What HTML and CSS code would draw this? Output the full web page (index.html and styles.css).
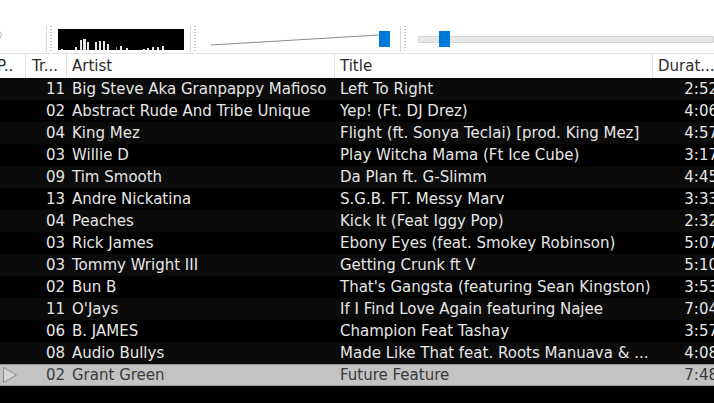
FILE: index.html
```html
<!DOCTYPE html>
<html lang="en">
<head>
  <meta charset="UTF-8">
  <title>Playlist</title>
  <link rel="stylesheet" href="styles.css">
</head>
<body>
  <div class="toolbar">
    <div class="tb-item tb-stub"><span class="stub-ring"></span></div>
    <div class="tb-sep"></div>
    <div class="tb-item tb-vis">
      <svg class="vis" width="126" height="21" viewBox="0 0 126 21">
        <rect x="3" y="20" width="2" height="1"/>
        <rect x="17" y="18" width="2" height="3"/>
        <rect x="22" y="11" width="2" height="10"/>
        <rect x="25" y="10" width="3" height="11"/>
        <rect x="29" y="13" width="2" height="8"/>
        <rect x="37" y="13" width="2" height="8"/>
        <rect x="41" y="12" width="2" height="9"/>
        <rect x="45" y="12" width="2" height="9"/>
        <rect x="49" y="15" width="2" height="6"/>
        <rect x="58" y="18" width="1" height="3" class="dim"/>
        <rect x="62" y="17" width="2" height="4"/>
        <rect x="68" y="19" width="2" height="2"/>
        <rect x="85" y="20" width="2" height="1"/>
        <rect x="89" y="19" width="2" height="2"/>
        <rect x="94" y="18" width="2" height="3"/>
        <rect x="99" y="18" width="2" height="3"/>
        <rect x="104" y="17" width="2" height="4"/>
      </svg>
    </div>
    <div class="tb-sep"></div>
    <div class="tb-item tb-volume">
      <svg width="202" height="26" viewBox="0 0 202 26">
        <line x1="13" y1="19" x2="181" y2="9" stroke="#8a8a8a" stroke-width="1"/>
        <rect x="181" y="5" width="11" height="16" fill="#0078d7"/>
      </svg>
    </div>
    <div class="tb-sep"></div>
    <div class="tb-item tb-seek">
      <div class="seek-track"></div>
      <div class="seek-thumb"></div>
    </div>
  </div>

  <div class="playlist">
    <div class="pl-row pl-head">
      <div class="cell c-pos">P..</div>
      <div class="cell c-track">Tr...</div>
      <div class="cell c-artist">Artist</div>
      <div class="cell c-title">Title</div>
      <div class="cell c-dur">Durat...</div>
    </div>
    <div id="rows"></div>
  </div>

  <script>
    const tracks = [
      ["11", "Big Steve Aka Granpappy Mafioso", "Left To Right", "2:52"],
      ["02", "Abstract Rude And Tribe Unique", "Yep! (Ft. DJ Drez)", "4:06"],
      ["04", "King Mez", "Flight (ft. Sonya Teclai) [prod. King Mez]", "4:57"],
      ["03", "Willie D", "Play Witcha Mama (Ft Ice Cube)", "3:17"],
      ["09", "Tim Smooth", "Da Plan ft. G-Slimm", "4:45"],
      ["13", "Andre Nickatina", "S.G.B. FT. Messy Marv", "3:33"],
      ["04", "Peaches", "Kick It (Feat Iggy Pop)", "2:32"],
      ["03", "Rick James", "Ebony Eyes (feat. Smokey Robinson)", "5:07"],
      ["03", "Tommy Wright III", "Getting Crunk ft V", "5:10"],
      ["02", "Bun B", "That's Gangsta (featuring Sean Kingston)", "3:53"],
      ["11", "O'Jays", "If I Find Love Again featuring Najee", "7:04"],
      ["06", "B. JAMES", "Champion Feat Tashay", "3:57"],
      ["08", "Audio Bullys", "Made Like That feat. Roots Manuava & ...", "4:08"],
      ["02", "Grant Green", "Future Feature", "7:48"]
    ];
    const playing = 13;
    const rows = document.getElementById("rows");

    tracks.forEach((t, i) => {
      const row = document.createElement("div");
      row.className = "pl-row" + (i % 2 === 0 ? " odd" : "") + (i === playing ? " playing" : "");
      const icon = i === playing
        ? '<svg width="18" height="18" viewBox="0 0 18 18"><polygon points="3.5,1.5 16.5,9 3.5,16.5" fill="#d4d4d4" stroke="#8c8c8c"/></svg>'
        : "";
      row.innerHTML =
        `<div class="cell c-pos">${icon}</div>` +
        `<div class="cell c-track">${t[0]}</div>` +
        `<div class="cell c-artist">${t[1]}</div>` +
        `<div class="cell c-title">${t[2]}</div>` +
        `<div class="cell c-dur">${t[3]}</div>`;
      rows.appendChild(row);
    });
  </script>
</body>
</html>
```

FILE: styles.css
```css
html, body {
  margin: 0;
  padding: 0;
  height: 100%;
}
body {
  background: #000;
  font-family: "DejaVu Sans", Verdana, sans-serif;
  font-size: 15px;
  overflow: hidden;
  width: 714px;
}

/* toolbar */
.toolbar {
  display: flex;
  align-items: stretch;
  height: 27px;
  padding-top: 26px;
  background: #fff;
  border-bottom: 1px solid #e3e3e3;
}
.tb-item {
  position: relative;
  height: 26px;
}
.tb-stub {
  width: 46px;
  overflow: hidden;
}
.stub-ring {
  position: absolute;
  left: -6px;
  top: 5px;
  width: 6px;
  height: 6px;
  border: 1px solid #b8b8b8;
  border-radius: 50%;
}
.tb-sep {
  width: 7px;
  height: 26px;
  border-left: 1px solid #d9d9d9;
  position: relative;
}
.tb-sep::after {
  content: "";
  position: absolute;
  left: 3px;
  top: 0;
  bottom: 0;
  width: 2px;
  background: repeating-linear-gradient(#c8c8c8 0 1px, transparent 1px 3px);
}
.tb-vis {
  width: 136px;
}
.vis {
  position: absolute;
  left: 4px;
  top: 3px;
  background: #000;
}
.vis rect {
  fill: #e6e6e6;
}
.vis rect.dim {
  fill: #8a8a8a;
}
.tb-volume {
  width: 202px;
}
.tb-seek {
  flex: 1;
}
.seek-track {
  position: absolute;
  left: 10px;
  right: 0;
  top: 10px;
  height: 5px;
  background: #e7e7e7;
  border: 1px solid #d6d6d6;
}
.seek-thumb {
  position: absolute;
  left: 31px;
  top: 5px;
  width: 11px;
  height: 16px;
  background: #0078d7;
}

/* playlist */
.playlist {
  width: 723px;
}
.pl-row {
  display: grid;
  grid-template-columns: 26px 41px 268px 318px 70px;
  height: 22px;
  line-height: 22px;
  color: #e6e6e6;
  background: #000;
}
.pl-row.odd {
  background: #0b0b0b;
}
.pl-row.playing {
  background: #c3c3c3;
  color: #3a3a3a;
  border-top: 1px solid #9a9a9a;
  border-bottom: 1px solid #9a9a9a;
  height: 20px;
  line-height: 20px;
}
.cell {
  overflow: hidden;
  white-space: nowrap;
  padding: 0 5px;
}
.c-pos {
  padding: 0;
  display: flex;
  align-items: center;
}
.c-track {
  text-align: right;
  padding-right: 2px;
}
.c-dur {
  text-align: right;
  padding-right: 5px;
}

.pl-head {
  height: 24px;
  line-height: 24px;
  background: #fff;
  color: #2b2b2b;
}
.pl-head .cell {
  border-right: 1px solid #e3e3e3;
}
.pl-head .c-pos {
  display: block;
  text-indent: -3px;
}
.pl-head .c-track {
  text-align: left;
  padding-left: 6px;
}
.pl-head .c-dur {
  text-align: left;
  padding-left: 5px;
  border-right: none;
}
```
